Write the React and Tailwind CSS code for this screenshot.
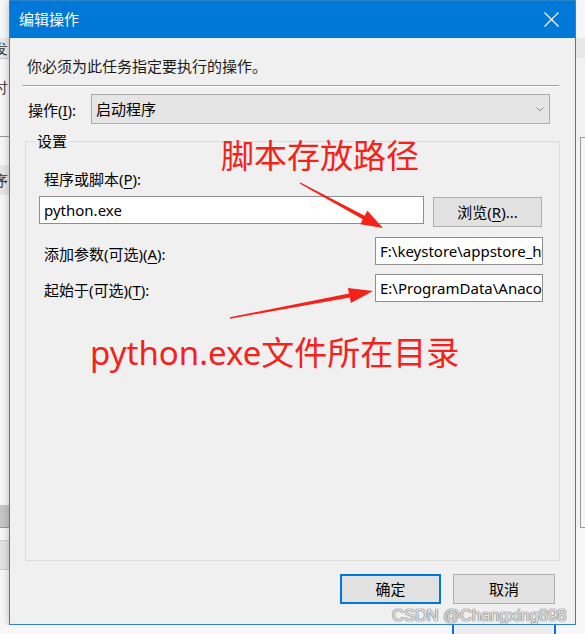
const ui = "font-['Noto_Sans','Noto_Sans_CJK_SC',sans-serif]"

function Key({ children }) {
  return <span className="underline underline-offset-[3px] decoration-1">{children}</span>
}

function Field({ value, className = '' }) {
  return (
    <div className={`h-[28px] bg-white border border-[#8f8f8f] flex items-center pl-[4px] overflow-hidden whitespace-nowrap text-[15px] text-black ${className}`}>
      {value}
    </div>
  )
}

function Button({ children, primary, className = '' }) {
  return (
    <div
      className={`h-[30px] bg-[#e1e1e1] flex items-center justify-center text-[15px] text-black ${
        primary ? 'border-2 border-[#0078d7]' : 'border border-[#adadad]'
      } ${className}`}
    >
      {children}
    </div>
  )
}

function LeftStrip() {
  return (
    <div className="w-[9px] flex flex-col bg-[#f7f7f7] overflow-hidden text-[15px] leading-[20px] text-[#333]">
      <div className="h-[38px]" />
      <div className="h-[20px] bg-[#ececec] -ml-[7px] flex items-center">发</div>
      <div className="h-px bg-[#c8c8c8]" />
      <div className="h-[77px] -ml-[7px] pt-[18px]">时</div>
      <div className="h-px bg-[#9a9a9a]" />
      <div className="h-[28px]" />
      <div className="h-[30px] bg-[#e6e6e6] -ml-[7px] flex items-center">序</div>
      <div className="h-[310px]" />
      <div className="h-[22px] bg-[#c6c6c6]" />
      <div className="h-px bg-[#9a9a9a]" />
      <div className="h-[12px]" />
      <div className="h-[30px] bg-[#e3e3e3] border-y border-[#cfcfcf] -ml-[4px] flex items-center">.</div>
    </div>
  )
}

function RightStrip() {
  return (
    <div className="flex-1 flex flex-col bg-[#f2f2f2] overflow-hidden">
      <div className="h-[38px] bg-[#f6f6f6]" />
      <div className="h-[20px] bg-[#e8e8e8]" />
      <div className="h-[79px]" />
      <div className="h-[391px] ml-[4px] border-l border-t border-b border-[#9a9a9a] bg-[#f5f5f5]" />
      <div className="flex-1 bg-[#f7f7f7]" />
    </div>
  )
}

function Dialog() {
  return (
    <div className={`w-[567px] flex flex-col bg-[#f0f0f0] border border-[#2b84d0] shadow-[0_0_8px_rgba(0,0,0,0.25)] ${ui}`}>
      <div className="h-[37px] bg-[#0078d7] flex items-center justify-between pl-[9px] pr-[15px] text-white">
        <span className="text-[15px]">编辑操作</span>
        <svg width="15" height="15" viewBox="0 0 15 15" className="mr-[1px]">
          <path d="M0.5 0.5 L14.5 14.5 M14.5 0.5 L0.5 14.5" stroke="white" strokeWidth="1.1" />
        </svg>
      </div>

      <div className="flex-1 flex flex-col pl-[12px] pr-[16px] text-[15px] text-black">
        <div className="pt-[18px] pl-[5px] leading-[20px] text-[#1a1a1a]">你必须为此任务指定要执行的操作。</div>
        <div className="mt-[9px] h-[2px] border-t border-[#a0a0a0] border-b border-b-white" />

        <div className="mt-[7px] flex items-center">
          <span className="w-[69px] pl-[6px] leading-[20px] pt-[2px]">操作(<Key>I</Key>):</span>
          <div className="w-[459px] h-[30px] bg-[#e5e5e5] border border-[#acacac] flex items-center justify-between pl-[4px] pr-[5px]">
            <span>启动程序</span>
            <svg width="8" height="5" viewBox="0 0 8 5">
              <path d="M0.5 0.5 L4 4 L7.5 0.5" fill="none" stroke="#8a8a8a" strokeWidth="1" />
            </svg>
          </div>
        </div>

        <div className="relative mt-[17px] ml-[3px] mr-[-1px] h-[420px] border border-[#dcdcdc] pt-[27px] pl-[13px] pr-[16px]">
          <span className="absolute -top-[11px] left-[9px] px-[2px] bg-[#f0f0f0] leading-[20px]">设置</span>
          <div className="pl-[5px] leading-[20px]">程序或脚本(<Key>P</Key>):</div>
          <div className="mt-[7px] flex items-start">
            <Field value="python.exe" className="w-[385px]" />
            <Button className="ml-[9px] mt-[1px] w-[109px]">
              浏览(<Key>R</Key>)...
            </Button>
          </div>
          <div className="mt-[10px] flex items-center justify-between">
            <span className="pl-[5px] pt-[6px] leading-[20px]">添加参数(可选)(<Key>A</Key>):</span>
            <Field value="F:\keystore\appstore_huawei\main.py" className="w-[168px]" />
          </div>
          <div className="mt-[9px] flex items-center justify-between">
            <span className="pl-[5px] pt-[4px] leading-[20px]">起始于(可选)(<Key>T</Key>):</span>
            <Field value="E:\ProgramData\Anaconda3" className="w-[168px]" />
          </div>
        </div>

        <div className="mt-[13px] flex justify-end gap-[12px] pr-[4px]">
          <Button primary className="w-[101px]">确定</Button>
          <Button className="w-[102px]">取消</Button>
        </div>
      </div>
    </div>
  )
}

function Arrow({ points }) {
  return <polygon points={points} fill="#f5221b" />
}

export default function App() {
  return (
    <div className="relative w-[585px] h-[634px] overflow-hidden flex flex-col bg-[#f5f5f5]">
      <div className="h-[625px] flex">
        <LeftStrip />
        <Dialog />
        <RightStrip />
      </div>
      <div className="flex-1 flex bg-[#f7f7f7]">
        <div className="ml-[452px] w-[104px] border-x-2 border-[#0078d7] bg-[#ececec]" />
      </div>

      <div className={`absolute left-[221px] top-[136px] text-[33px] leading-[40px] text-[#f5221b] ${ui}`}>
        脚本存放路径
      </div>
      <div className={`absolute left-[90px] top-[333px] text-[33px] leading-[40px] text-[#f5221b] ${ui}`}>
        python.exe文件所在目录
      </div>

      <svg className="absolute inset-0 pointer-events-none" width="585" height="634" viewBox="0 0 585 634">
        <Arrow points="300.4,182.4 364.6,215.7 367.4,210.8 383,228 360.2,224.2 362.8,219.3 299.6,183.6" />
        <Arrow points="230.1,318.7 349.8,297.5 350.9,303 373,291 347.9,288.1 349.0,293.5 229.9,317.3" />
      </svg>

      <div className="absolute left-[392px] top-[604px] font-['Liberation_Sans',sans-serif] text-[16.5px] leading-[22px] text-[#e9e9e9] [text-shadow:0_0_1px_#6b6b6b,0_0_1px_#6b6b6b,0_0_1px_#6b6b6b]">
        CSDN @Changxing898
      </div>
    </div>
  )
}
